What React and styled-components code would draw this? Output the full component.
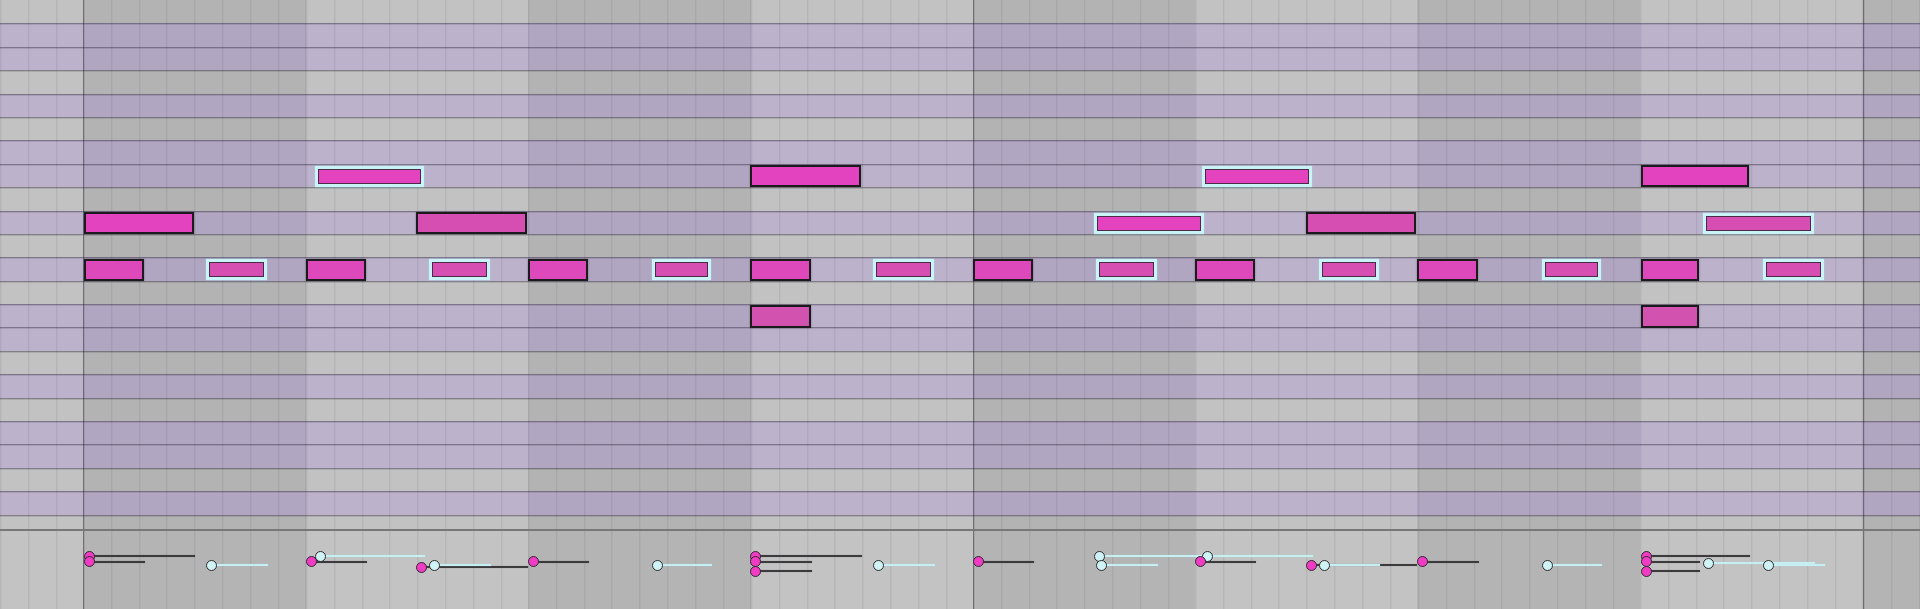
import React from 'react';
import styled, { createGlobalStyle, css } from 'styled-components';

const ROW_H = 23.4;
const COL_W = 27.8;
const BAR_W = COL_W * 8;
const LEAD_W = COL_W * 3;
const GRID_H = 529;
const LANE_TOP = 531;

// pitch rows from the top down, true = in key
const SCALE = [false, true, true, false, true, false, true, true, false, true, false, true];

const FILLS = {
  hi: '#e443bf',
  mid: '#dd48ba',
  low: '#d64eb2',
  min: '#d252af',
};

// [row, left, right, selected, velocity y]
const NOTES = [
  [7, 315, 424, true, 556],
  [7, 750, 861, false, 556],
  [7, 1202, 1312, true, 556],
  [7, 1641, 1749, false, 556],

  [9, 84, 194, false, 556],
  [9, 416, 527, false, 567],
  [9, 1094, 1204, true, 556],
  [9, 1306, 1416, false, 565],
  [9, 1703, 1814, true, 563],

  [11, 84, 144, false, 561.5],
  [11, 206, 267, true, 565.3],
  [11, 306, 366, false, 561.5],
  [11, 429, 490, true, 565.3],
  [11, 528, 588, false, 561.5],
  [11, 652, 711, true, 565.3],
  [11, 750, 811, false, 561.5],
  [11, 873, 934, true, 565.3],
  [11, 973, 1033, false, 561.5],
  [11, 1096, 1157, true, 565.3],
  [11, 1195, 1255, false, 561.5],
  [11, 1319, 1379, true, 565.3],
  [11, 1417, 1478, false, 561.5],
  [11, 1542, 1601, true, 565.3],
  [11, 1641, 1699, false, 561.5],
  [11, 1763, 1824, true, 565.3],

  [13, 750, 811, false, 571],
  [13, 1641, 1699, false, 571],
];

const toneOf = (v) => (v <= 557 ? 'hi' : v <= 562 ? 'mid' : v <= 568 ? 'low' : 'min');

// lead-in columns, then full bars until the right edge
const buildBars = () => {
  const bars = [{ w: LEAD_W, dark: false, major: false }];
  let x = LEAD_W;
  let i = 0;
  while (x < 1920) {
    const w = Math.min(BAR_W, 1920 - x);
    bars.push({ w, dark: i % 2 === 0, major: i % 4 === 0 });
    x += w;
    i += 1;
  }
  return bars;
};

const BARS = buildBars();

const buildRows = () => {
  const rows = [];
  for (let k = 0; k * ROW_H < GRID_H; k++) {
    const h = Math.min(ROW_H, GRID_H - k * ROW_H);
    rows.push({ h, inKey: SCALE[k % 12], first: k === 0 });
  }
  return rows;
};

const ROWS = buildRows();

const GlobalStyle = createGlobalStyle`
  html, body {
    margin: 0;
    padding: 0;
    background: #b8b8b8;
    overflow: hidden;
  }
  body {
    font-family: "Liberation Sans", Arial, sans-serif;
  }
`;

const Roll = styled.div`
  width: 1920px;
  height: 609px;
  display: flex;
  flex-direction: column;
  overflow: hidden;
`;

const NoteGrid = styled.div`
  position: relative;
  height: ${GRID_H}px;
  flex: none;
  display: flex;
  flex-direction: column;
`;

const KeyRow = styled.div`
  display: flex;
  flex: none;
  height: ${(p) => p.$h}px;
`;

const cellColor = (p) => {
  if (p.$lane) return p.$dark ? '#b4b4b4' : '#c3c3c3';
  if (p.$inKey) return p.$dark ? '#b1a6c1' : '#bcb2cc';
  return p.$dark ? '#b3b3b3' : '#c2c2c2';
};

const BarCell = styled.div`
  flex: none;
  width: ${(p) => p.$w}px;
  height: 100%;
  background-color: ${cellColor};
  background-image: repeating-linear-gradient(
    90deg,
    rgba(60, 55, 70, 0.1) 0 1px,
    rgba(60, 55, 70, 0.04) 1px 2px,
    transparent 2px ${COL_W}px
  );
  box-shadow: ${(p) =>
    [
      p.$major ? 'inset 1px 0 0 rgba(40, 35, 45, 0.38), inset 2px 0 0 rgba(40, 35, 45, 0.08)' : null,
      p.$rowLine ? 'inset 0 1px 0 rgba(45, 40, 55, 0.34), inset 0 2px 0 rgba(45, 40, 55, 0.14)' : null,
    ]
      .filter(Boolean)
      .join(', ') || 'none'};
`;

const VelocityLane = styled.div`
  position: relative;
  flex: 1;
  display: flex;
  border-top: 2px solid #777777;
  box-shadow: inset 0 1px 0 rgba(0, 0, 0, 0.12);
`;

const Note = styled.div.attrs((p) => ({
  style: { left: p.$x, top: p.$y, width: p.$w, height: p.$h },
}))`
  position: absolute;
  box-sizing: border-box;
  background: ${(p) => FILLS[p.$tone]};
  ${(p) =>
    p.$selected
      ? css`
          border: 1.5px solid #4b2a46;
          box-shadow: 0 0 0 3px #c9f3f6, 0 0 2px 3px rgba(160, 230, 240, 0.6);
        `
      : css`
          border: 2px solid #1d1a1d;
          box-shadow: 0 0 2px rgba(0, 0, 0, 0.35);
        `}
`;

const VelocityStem = styled.div.attrs((p) => ({
  style: { left: p.$x, top: p.$y - 1, width: p.$w },
}))`
  position: absolute;
  height: 2px;
  background: ${(p) => (p.$selected ? '#c6eff3' : '#3d3a3d')};
  box-shadow: 0 0 1px ${(p) => (p.$selected ? 'rgba(170, 230, 236, 0.8)' : 'rgba(0, 0, 0, 0.4)')};
`;

const VelocityDot = styled.div.attrs((p) => ({
  style: { left: p.$x - 5.5, top: p.$y - 5.5 },
}))`
  position: absolute;
  box-sizing: border-box;
  width: 11px;
  height: 11px;
  border-radius: 50%;
  border: 1.5px solid #2e2a2e;
  background: ${(p) => (p.$selected ? '#d0f3f5' : '#f03cc5')};
`;

const notes = NOTES.map(([row, left, right, selected, vel]) => ({
  row,
  left,
  right,
  selected,
  vel,
  tone: toneOf(vel),
}));

const App = () => {
  const dots = [...notes].sort((a, b) => a.vel - b.vel);

  return (
    <Roll>
      <GlobalStyle />

      <NoteGrid>
        {ROWS.map((r, k) => (
          <KeyRow key={k} $h={r.h}>
            {BARS.map((b, i) => (
              <BarCell
                key={i}
                $w={b.w}
                $dark={b.dark}
                $major={b.major}
                $inKey={r.inKey}
                $rowLine={!r.first}
              />
            ))}
          </KeyRow>
        ))}

        {notes.map((n, i) => {
          const rowTop = n.row * ROW_H;
          return n.selected ? (
            <Note
              key={i}
              $selected
              $tone={n.tone}
              $x={n.left + 3}
              $w={n.right - n.left - 6}
              $y={rowTop + 5}
              $h={15}
            />
          ) : (
            <Note
              key={i}
              $tone={n.tone}
              $x={n.left}
              $w={n.right - n.left}
              $y={rowTop + 1.2}
              $h={22.2}
            />
          );
        })}
      </NoteGrid>

      <VelocityLane>
        {BARS.map((b, i) => (
          <BarCell key={i} $lane $w={b.w} $dark={b.dark} $major={b.major} />
        ))}

        {notes.map((n, i) => (
          <VelocityStem
            key={`s${i}`}
            $selected={n.selected}
            $x={n.left + 5.5}
            $w={n.right - n.left - 5}
            $y={n.vel - LANE_TOP}
          />
        ))}

        {dots.map((n, i) => (
          <VelocityDot
            key={`d${i}`}
            $selected={n.selected}
            $x={n.left + 5.5}
            $y={n.vel - LANE_TOP}
          />
        ))}
      </VelocityLane>
    </Roll>
  );
};

export default App;
